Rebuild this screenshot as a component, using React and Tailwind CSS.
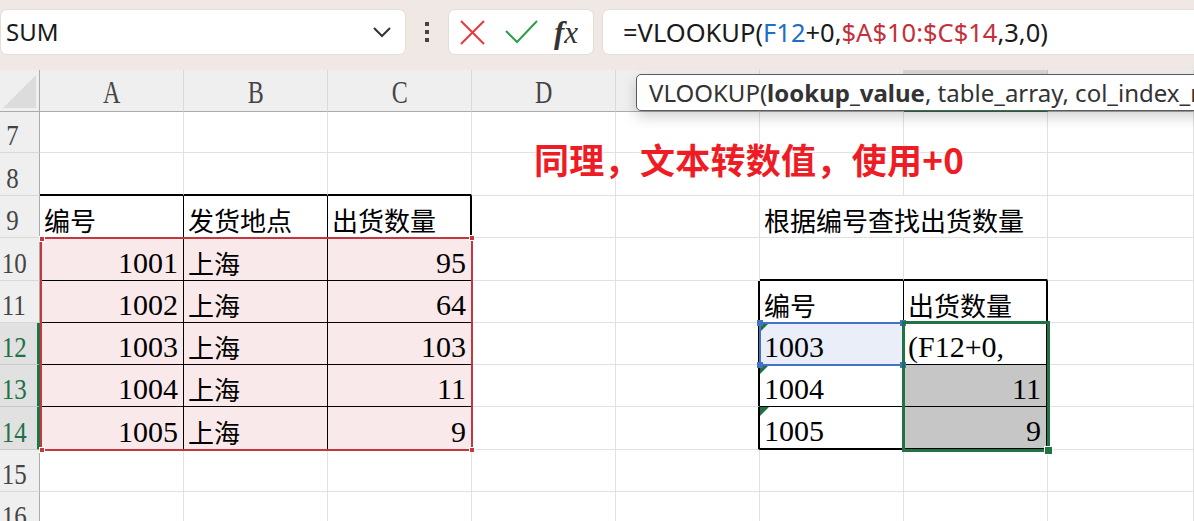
import React from 'react';

const serif = "font-['Liberation_Serif','Noto_Sans_CJK_SC',serif]";
const cjk = "font-['Noto_Sans_CJK_SC',sans-serif]";
const ui = "font-['Noto_Sans','Noto_Sans_CJK_SC',sans-serif]";

const G = 'border-r border-b border-[#e1e1e1]';
const PINK = 'border-r border-b border-black bg-[#f9e9ea]';

const COLS = ['A', 'B', 'C', 'D', 'E', 'F', 'G', 'H'];
// E..H headers sit under the function tooltip
const SHOWN = ['A', 'B', 'C', 'D'];

// cell overrides, keyed by address
const cells = {
    A8: { b: 'border-r border-r-[#e1e1e1] border-b-2 border-b-black' },
    B8: { b: 'border-r border-r-[#e1e1e1] border-b-2 border-b-black' },
    C8: { b: 'border-r border-r-[#e1e1e1] border-b-2 border-b-black' },
    A9: { b: 'border-r border-b border-black', t: '编号', k: 'cjk' },
    B9: { b: 'border-r border-b border-black', t: '发货地点', k: 'cjk' },
    C9: { b: 'border-r-2 border-b border-black', t: '出货数量', k: 'cjk' },
    F9: { b: 'border-b border-b-[#e1e1e1] border-r border-r-transparent', t: '根据编号查找出货数量', k: 'cjk' },
    A10: { b: PINK, t: '1001', k: 'num' },
    B10: { b: PINK, t: '上海', k: 'cjk' },
    C10: { b: PINK, t: '95', k: 'num' },
    A11: { b: PINK, t: '1002', k: 'num' },
    B11: { b: PINK, t: '上海', k: 'cjk' },
    C11: { b: PINK, t: '64', k: 'num' },
    A12: { b: PINK, t: '1003', k: 'num' },
    B12: { b: PINK, t: '上海', k: 'cjk' },
    C12: { b: PINK, t: '103', k: 'num' },
    A13: { b: PINK, t: '1004', k: 'num' },
    B13: { b: PINK, t: '上海', k: 'cjk' },
    C13: { b: PINK, t: '11', k: 'num' },
    A14: { b: PINK, t: '1005', k: 'num' },
    B14: { b: PINK, t: '上海', k: 'cjk' },
    C14: { b: PINK, t: '9', k: 'num' },
    F10: { b: 'border-r border-r-[#e1e1e1] border-b-2 border-b-black' },
    G10: { b: 'border-r border-r-[#e1e1e1] border-b-2 border-b-black' },
    E11: { b: 'border-b border-b-[#e1e1e1] border-r-2 border-r-black' },
    E12: { b: 'border-b border-b-[#e1e1e1] border-r-2 border-r-black' },
    E13: { b: 'border-b border-b-[#e1e1e1] border-r-2 border-r-black' },
    E14: { b: 'border-b border-b-[#e1e1e1] border-r-2 border-r-black' },
    F11: { b: 'border-r border-b border-black', t: '编号', k: 'cjk' },
    G11: { b: 'border-r-2 border-b border-black', t: '出货数量', k: 'cjk' },
    F12: { b: 'border-r border-b border-black bg-[#e9eef8]', t: '1003', k: 'text', flag: true },
    F13: { b: 'border-r border-b border-black', t: '1004', k: 'text', flag: true },
    F14: { b: 'border-r border-black border-b-2', t: '1005', k: 'text', flag: true },
    G12: { b: 'border-r-2 border-b border-black bg-white', t: '(F12+0,', k: 'text' },
    G13: { b: 'border-r-2 border-b border-black bg-[#c6c6c6]', t: '11', k: 'num' },
    G14: { b: 'border-r-2 border-b-2 border-black bg-[#c6c6c6]', t: '9', k: 'num' },
};

const ROWS = [7, 8, 9, 10, 11, 12, 13, 14, 15, 16];

function Cell({ addr }) {
    const c = cells[addr] || {};
    let inner = null;
    if (c.t) {
        if (c.k === 'cjk') {
            inner = <span className={`${cjk} text-[26px] leading-none pl-[4px] pb-[4px] whitespace-nowrap`}>{c.t}</span>;
        } else if (c.k === 'num') {
            inner = <span className={`${serif} text-[30px] leading-none ml-auto pr-[5px] pb-[2px]`}>{c.t}</span>;
        } else {
            inner = <span className={`${serif} text-[30px] leading-none pl-[4px] pb-[2px] whitespace-nowrap`}>{c.t}</span>;
        }
    }
    return (
        <div className={`relative flex items-end text-black ${c.b || G}`}>
            {c.flag && (
                <div className="absolute left-0 top-0 w-0 h-0 border-t-[9px] border-r-[9px] border-t-[#1e7145] border-r-transparent" />
            )}
            {inner}
        </div>
    );
}

function RowHead({ n }) {
    const active = n >= 12 && n <= 14;
    return (
        <div
            className={`flex items-end overflow-hidden ${serif} text-[29px] leading-none ${
                active
                    ? 'bg-[#e1e1e1] text-[#1e7145] border-r-[3px] border-r-[#217346] border-b border-b-[#c9c9c9]'
                    : 'bg-[#efefef] text-[#444] border-r border-r-[#ababab] border-b border-b-[#d9d9d9]'
            }`}
        >
            <span className="block w-[25px] text-center pb-[2px] scale-x-[0.86]">{n}</span>
        </div>
    );
}

function Handle({ className }) {
    return <div className={`absolute w-[6px] h-[6px] ${className}`} />;
}

export default function App() {
    return (
        <div className="relative w-[1194px] h-[521px] overflow-hidden bg-white">
            {/* formula bar */}
            <div className={`flex items-start h-[70px] pt-[9px] bg-[#efe8e5] ${ui}`}>
                <div className="w-[406px] h-[46px] shrink-0 bg-white rounded-[7px] border border-[#e4dedb] flex items-center justify-between pl-[5px] pr-[13px]">
                    <span className="text-[24px] text-[#1a1a1a]">SUM</span>
                    <svg width="20" height="12" viewBox="0 0 20 12">
                        <path d="M2 2 L10 10 L18 2" fill="none" stroke="#333" strokeWidth="2" />
                    </svg>
                </div>
                <div className="w-[42px] h-[46px] shrink-0 flex flex-col items-center justify-center gap-[4px]">
                    <div className="w-[4px] h-[4px] bg-[#444]" />
                    <div className="w-[4px] h-[4px] bg-[#444]" />
                    <div className="w-[4px] h-[4px] bg-[#444]" />
                </div>
                <div className="w-[146px] h-[46px] shrink-0 bg-white rounded-[7px] border border-[#e4dedb] flex items-center pl-[11px] gap-[20px]">
                    <svg width="25" height="25" viewBox="0 0 25 25">
                        <path d="M1 1 L24 24 M24 1 L1 24" stroke="#e8383d" strokeWidth="2" />
                    </svg>
                    <svg width="33" height="24" viewBox="0 0 33 24">
                        <path d="M1 11 L12 22 L32 1" fill="none" stroke="#2c9f48" strokeWidth="2" />
                    </svg>
                    <span className="font-['Liberation_Serif',serif] italic text-[31px] leading-none text-[#333] -ml-[4px]">
                        <span className="font-bold">f</span>x
                    </span>
                </div>
                <div className="ml-[8px] w-[640px] h-[46px] shrink-0 bg-white rounded-[7px] border border-[#e4dedb] flex items-center pl-[20px] text-[25.5px] text-[#1a1a1a] whitespace-nowrap">
                    <span>=VLOOKUP(</span>
                    <span className="text-[#1f6fc5]">F12</span>
                    <span>+0,</span>
                    <span className="text-[#c4303a]">$A$10:$C$14</span>
                    <span>,3,0)</span>
                </div>
            </div>

            {/* sheet */}
            <div className="grid grid-cols-[40px_144px_144px_144px_144px_144px_144px_144px_146px] grid-rows-[42px_41px_43px_42px_43px_42px_42px_42px_43px_42px_42px]">
                <div className="relative bg-[#efefef] border-r border-r-[#ababab] border-b border-b-[#ababab]">
                    <div className="absolute left-[3px] top-[5px] w-0 h-0 border-l-[33px] border-b-[33px] border-l-transparent border-b-[#dcdcdc]" />
                </div>
                {COLS.map((c) => (
                    <div
                        key={c}
                        className={`flex items-center justify-center ${serif} text-[32px] leading-none text-[#444] ${
                            c === 'G'
                                ? 'bg-[#d6d6d6] border-r border-r-[#c4c4c4] border-b-2 border-b-[#217346]'
                                : 'bg-[#efefef] border-r border-r-[#d9d9d9] border-b border-b-[#ababab]'
                        }`}
                    >
                        {SHOWN.includes(c) && <span className="scale-x-[0.75] pt-[2px]">{c}</span>}
                    </div>
                ))}
                {ROWS.map((r) => (
                    <React.Fragment key={r}>
                        <RowHead n={r} />
                        {COLS.map((c) => (
                            <Cell key={c + r} addr={c + r} />
                        ))}
                    </React.Fragment>
                ))}
            </div>

            {/* range reference A10:C14 */}
            <div className="absolute left-[40px] top-[237px] w-[433px] h-[214px] border-2 border-[#c4373f]">
                <Handle className="-left-[3px] -top-[3px] bg-[#c4373f] border border-white" />
                <Handle className="-right-[4px] -top-[4px] bg-[#c4373f] border border-white" />
                <Handle className="-left-[3px] -bottom-[4px] bg-[#c4373f] border border-white" />
                <Handle className="-right-[4px] -bottom-[4px] bg-[#c4373f] border border-white" />
            </div>

            {/* range reference F12 */}
            <div className="absolute left-[759px] top-[322px] w-[145px] h-[44px] border-2 border-[#4472c4]">
                <Handle className="-left-[4px] -top-[4px] bg-[#4472c4]" />
                <Handle className="-right-[4px] -top-[4px] bg-[#4472c4]" />
                <Handle className="-left-[4px] -bottom-[4px] bg-[#4472c4]" />
                <Handle className="-right-[4px] -bottom-[4px] bg-[#4472c4]" />
            </div>

            {/* selection G12:G14 */}
            <div className="absolute left-[902px] top-[321px] w-[148px] h-[131px] border-[3px] border-[#217346]">
                <div className="absolute -right-[6px] -bottom-[6px] w-[9px] h-[9px] bg-[#217346] border border-white" />
            </div>

            {/* annotation */}
            <div
                className={`absolute left-[534px] top-[141px] ${cjk} font-bold text-[35px] tracking-[0.3px] leading-none text-[#ee1c25] whitespace-nowrap [text-shadow:0_0_3px_#fff,0_0_2px_#fff]`}
            >
                同理，文本转数值，使用+0
            </div>

            {/* function tooltip */}
            <div
                className={`absolute left-[636px] top-[74px] h-[37px] w-[620px] rounded-[5px] border-[1.5px] border-[#5a5a5a] bg-white shadow-[0_6px_14px_rgba(0,0,0,0.18)] flex items-center pl-[12px] text-[24px] text-[#333] whitespace-nowrap overflow-hidden ${ui}`}
            >
                VLOOKUP(<b className="font-bold">lookup_value</b>, table_array, col_index_num
            </div>
        </div>
    );
}
